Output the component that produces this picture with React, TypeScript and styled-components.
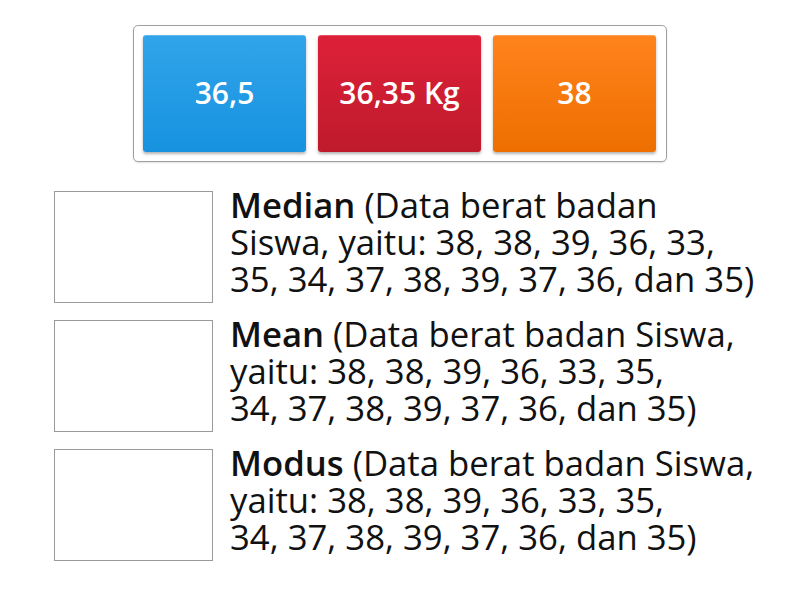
import React from 'react';
import styled, {createGlobalStyle} from 'styled-components';

type Tile = {
    label: string;
    top: string;
    bottom: string;
    edge: string;
};

type Item = {
    title: string;
    lines: string[];
};

const tiles: Tile[] = [
    {label: '36,5', top: '#31a4ea', bottom: '#1692df', edge: '#5cb8ee'},
    {label: '36,35 Kg', top: '#dd2038', bottom: '#bf1a2c', edge: '#e6505f'},
    {label: '38', top: '#ff831c', bottom: '#ee6f00', edge: '#ffa050'},
];

const items: Item[] = [
    {
        title: 'Median',
        lines: [' (Data berat badan', 'Siswa, yaitu: 38, 38, 39, 36, 33,', '35, 34, 37, 38, 39, 37, 36, dan 35)'],
    },
    {
        title: 'Mean',
        lines: [' (Data berat badan Siswa,', 'yaitu: 38, 38, 39, 36, 33, 35,', '34, 37, 38, 39, 37, 36, dan 35)'],
    },
    {
        title: 'Modus',
        lines: [' (Data berat badan Siswa,', 'yaitu: 38, 38, 39, 36, 33, 35,', '34, 37, 38, 39, 37, 36, dan 35)'],
    },
];

const GlobalStyle = createGlobalStyle`
    body {
        margin: 0;
        background: #ffffff;
        font-family: "Open Sans", "Liberation Sans", sans-serif;
    }
`;

const Page = styled.div`
    width: 800px;
    height: 600px;
    display: flex;
    flex-direction: column;
    align-items: center;
    padding-top: 25px;
    box-sizing: border-box;
`;

const Tray = styled.div`
    display: flex;
    gap: 12px;
    padding: 9px 10px 9px 9px;
    border: 1px solid #a0a0a0;
    border-radius: 5px;
    box-shadow: 0 1px 2px rgba(0, 0, 0, 0.12);
`;

const TileBox = styled.div<{$top: string; $bottom: string; $edge: string}>`
    width: 163px;
    height: 117px;
    display: flex;
    align-items: center;
    justify-content: center;
    padding-bottom: 3px;
    border-radius: 3px;
    border-top: 1px solid ${(p) => p.$edge};
    box-sizing: border-box;
    background: linear-gradient(to bottom, ${(p) => p.$top}, ${(p) => p.$bottom});
    box-shadow: 0 2px 3px rgba(0, 0, 0, 0.3);
    color: #ffffff;
    font-size: 30px;
    font-weight: 600;
`;

const List = styled.div`
    align-self: flex-start;
    margin: 29px 0 0 54px;
    display: flex;
    flex-direction: column;
    gap: 17px;
`;

const Row = styled.div`
    display: flex;
    align-items: flex-start;
    gap: 17px;
`;

const Slot = styled.div`
    width: 159px;
    height: 112px;
    flex: none;
    box-sizing: border-box;
    border: 1px solid #9a9a9a;
    background: #ffffff;
`;

const Text = styled.div`
    margin-top: -5px;
    font-size: 34.7px;
    line-height: 37px;
    color: #111111;
    white-space: nowrap;
`;

const Title = styled.span`
    font-weight: 600;
`;

const App = () => {
    return (
        <Page>
            <GlobalStyle/>
            <Tray>
                {tiles.map((t) => (
                    <TileBox
                        key={t.label}
                        $top={t.top}
                        $bottom={t.bottom}
                        $edge={t.edge}
                    >
                        {t.label}
                    </TileBox>
                ))}
            </Tray>
            <List>
                {items.map((item) => (
                    <Row key={item.title}>
                        <Slot/>
                        <Text>
                            <Title>{item.title}</Title>
                            {item.lines[0]}
                            <br/>
                            {item.lines[1]}
                            <br/>
                            {item.lines[2]}
                        </Text>
                    </Row>
                ))}
            </List>
        </Page>
    );
};

export default App;
